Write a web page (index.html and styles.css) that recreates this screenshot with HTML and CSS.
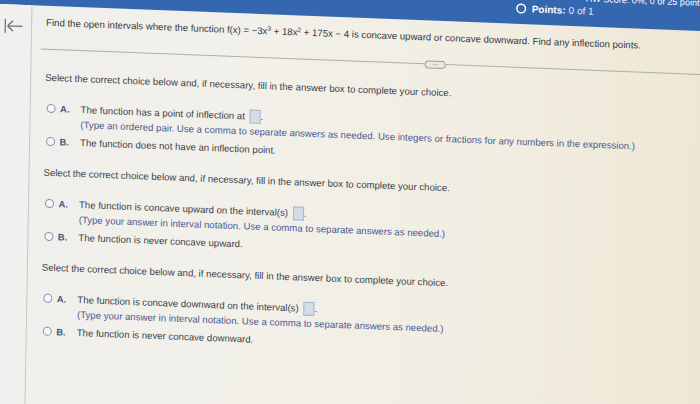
FILE: index.html
```html
<!DOCTYPE html>
<html lang="en">
<head>
<meta charset="utf-8">
<title>Concavity question</title>
<link rel="stylesheet" href="styles.css">
</head>
<body>
<div class="screen">
  <header class="topbar">
    <div class="topline">
      <span class="qnum">Question 5, 4.3.15</span>
      <span class="score">HW Score: 0%, 0 of 25 points</span>
    </div>
    <div class="pointsline">
      <svg class="pt-icon" width="11" height="11" viewBox="0 0 11 11"><circle cx="5.5" cy="5.5" r="4.3" fill="none" stroke="#ffffff" stroke-width="1.5"/></svg>
      <b>Points:</b><span class="pt-val">0 of 1</span>
    </div>
  </header>
  <div class="body">
    <aside class="rail">
      <svg class="back" width="20" height="15" viewBox="0 0 20 15"><path d="M1.2 0.5V14.5M3.5 7.5H18.5M3.5 7.5L9 2.2M3.5 7.5L9 12.8" fill="none" stroke="#6c7272" stroke-width="1.3"/></svg>
    </aside>
    <main class="pane">
      <p class="question">Find the open intervals where the function f(x) = &minus;3x<sup>3</sup> + 18x<sup>2</sup> + 175x &minus; 4 is concave upward or concave downward. Find any inflection points.</p>
      <div class="divider"><span class="rule-l"></span><span class="pill">&middot;&middot;&middot;</span><span class="rule-r"></span></div>

      <section class="part">
        <p class="prompt">Select the correct choice below and, if necessary, fill in the answer box to complete your choice.</p>
        <div class="choice">
          <div class="mark"><span class="radio"></span><b>A.</b></div>
          <div class="ctext">
            <div class="line-a">The function has a point of inflection at <span class="box"></span>.</div>
            <div class="hint">(Type an ordered pair. Use a comma to separate answers as needed. Use integers or fractions for any numbers in the expression.)</div>
          </div>
        </div>
        <div class="choice b">
          <div class="mark"><span class="radio"></span><b>B.</b></div>
          <div class="ctext">The function does not have an inflection point.</div>
        </div>
      </section>

      <section class="part">
        <p class="prompt">Select the correct choice below and, if necessary, fill in the answer box to complete your choice.</p>
        <div class="choice">
          <div class="mark"><span class="radio"></span><b>A.</b></div>
          <div class="ctext">
            <div class="line-a">The function is concave upward on the interval(s) <span class="box"></span>.</div>
            <div class="hint">(Type your answer in interval notation. Use a comma to separate answers as needed.)</div>
          </div>
        </div>
        <div class="choice b">
          <div class="mark"><span class="radio"></span><b>B.</b></div>
          <div class="ctext">The function is never concave upward.</div>
        </div>
      </section>

      <section class="part">
        <p class="prompt">Select the correct choice below and, if necessary, fill in the answer box to complete your choice.</p>
        <div class="choice">
          <div class="mark"><span class="radio"></span><b>A.</b></div>
          <div class="ctext">
            <div class="line-a">The function is concave downward on the interval(s) <span class="box"></span>.</div>
            <div class="hint">(Type your answer in interval notation. Use a comma to separate answers as needed.)</div>
          </div>
        </div>
        <div class="choice b">
          <div class="mark"><span class="radio"></span><b>B.</b></div>
          <div class="ctext">The function is never concave downward.</div>
        </div>
      </section>
    </main>
  </div>
</div>
</body>
</html>
```
FILE: styles.css
```css
html, body {
  margin: 0;
  padding: 0;
  height: 100%;
  overflow: hidden;
  background: #f1efe7;
}

.screen {
  width: 730px;
  height: 450px;
  transform-origin: 0 0;
  transform: translateY(-27px) skewY(2.2deg) skewX(-1deg);
  font-family: "Liberation Sans", Arial, sans-serif;
  background: linear-gradient(90deg, #efefec 0%, #f2f0e9 35%, #f1ede1 70%, #ede6d2 100%);
  display: flex;
  flex-direction: column;
}

.topbar {
  height: 31px;
  background: #3467b0;
  color: #ffffff;
  flex: none;
}

.topline {
  height: 6px;
  line-height: 6px;
  font-size: 9px;
  display: flex;
  justify-content: space-between;
  padding: 0 26px 0 380px;
}

.pointsline {
  height: 18px;
  display: flex;
  align-items: center;
  padding-left: 516px;
  font-size: 10px;
  gap: 3px;
}

.pointsline b {
  margin-left: 2px;
  font-weight: bold;
}

.pt-val {
  color: #e6ecf6;
}

.body {
  flex: 1;
  display: flex;
}

.rail {
  width: 33px;
  flex: none;
  border-right: 1px solid #c6c7c4;
  background: #f0f0ee;
  padding-top: 14px;
  box-sizing: border-box;
}

.back {
  display: block;
  margin-left: 5px;
}

.pane {
  flex: 1;
  padding: 10px 0 0 14px;
  color: #3b3f47;
  font-size: 9.6px;
}

.question {
  margin: 0;
  line-height: 14px;
  white-space: nowrap;
  color: #34373d;
}

.question sup {
  font-size: 6.5px;
  line-height: 0;
  vertical-align: 3.5px;
}

.divider {
  margin: 16px 0 0 -5px;
  height: 7px;
  display: flex;
  align-items: center;
}

.rule-l {
  width: 384px;
  height: 1px;
  background: #aeada8;
}

.rule-r {
  flex: 1;
  height: 1px;
  background: #aeada8;
}

.pill {
  width: 19px;
  height: 6px;
  border: 1px solid #9c9c9a;
  border-radius: 4px;
  background: #e9e8e3;
  color: #7c7c7c;
  font-size: 8px;
  line-height: 5px;
  text-align: center;
  letter-spacing: -0.5px;
}

.part {
  padding-top: 17.5px;
}

.part + .part {
  padding-top: 17px;
}

.prompt {
  margin: 0 0 16px;
  line-height: 14px;
  white-space: nowrap;
}

.choice {
  display: grid;
  grid-template-columns: 36px 1fr;
}

.choice.b {
  margin-top: 4px;
}

.mark {
  display: flex;
  align-items: center;
  gap: 5px;
  height: 16px;
  padding-left: 1.5px;
  color: #4a5677;
  font-size: 9.4px;
}

.choice.b .mark {
  height: 14px;
}

.radio {
  width: 7px;
  height: 7px;
  border: 1.2px solid #8191b4;
  border-radius: 50%;
  background: #f6f6f4;
  flex: none;
}

.ctext {
  line-height: 14px;
  white-space: nowrap;
}

.line-a {
  height: 16px;
  line-height: 16px;
}

.hint {
  color: #4a5994;
  line-height: 14px;
}

.box {
  display: inline-block;
  width: 11px;
  height: 14px;
  margin-left: 2px;
  vertical-align: middle;
  background: #d3dce8;
  border: 1px solid #a6b7cd;
  box-sizing: border-box;
}
```
